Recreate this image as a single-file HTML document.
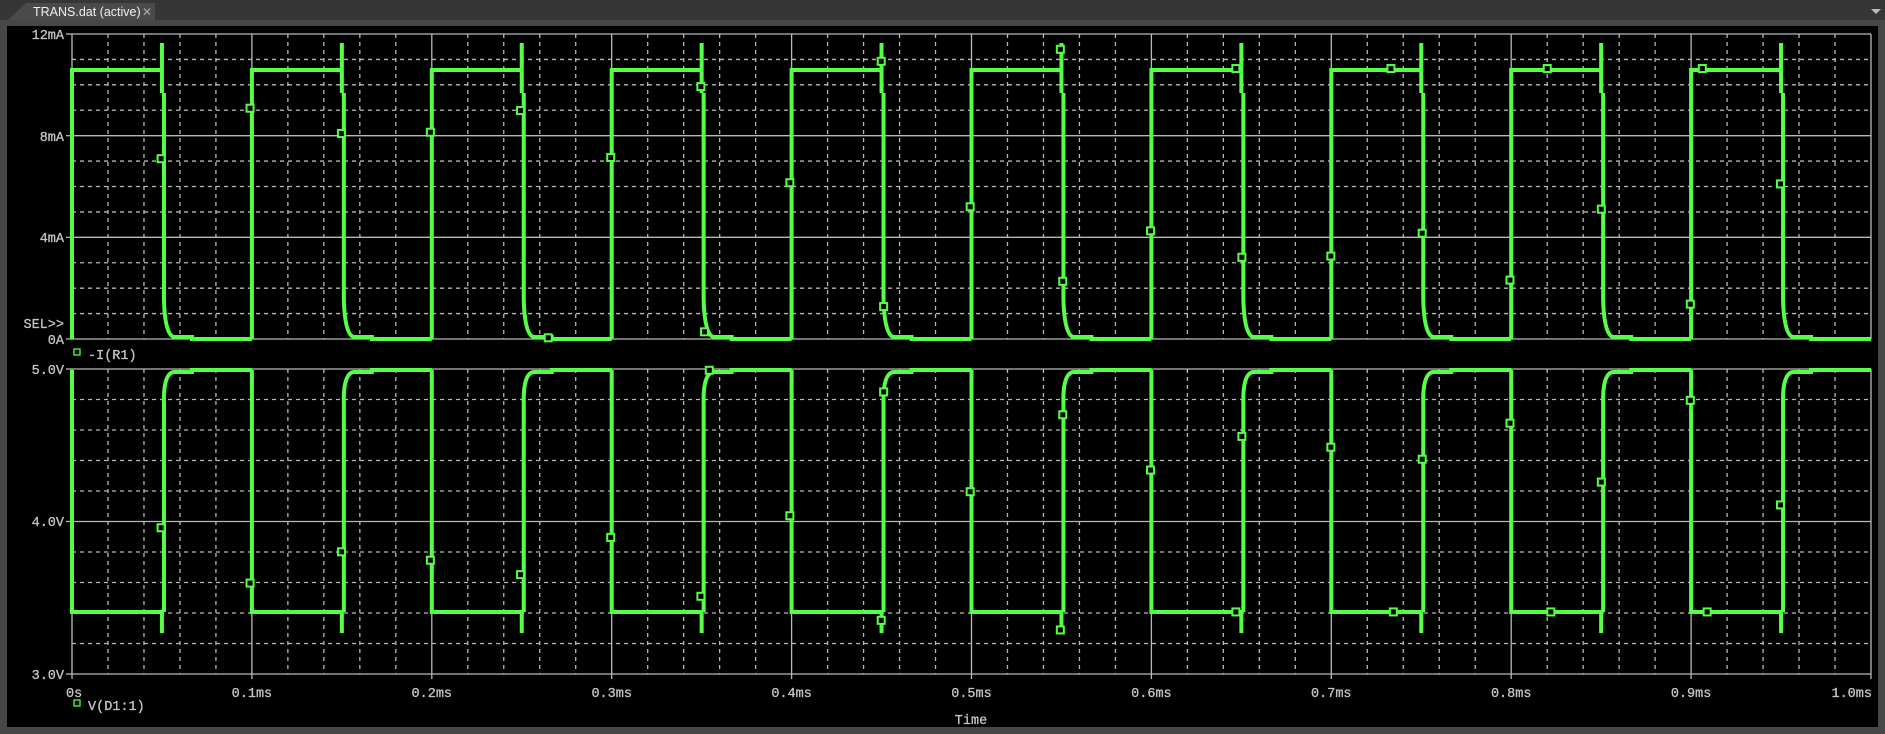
<!DOCTYPE html>
<html><head><meta charset="utf-8"><style>
html,body{margin:0;padding:0;background:#3a3a3a;width:1885px;height:734px;overflow:hidden}
svg{position:absolute;left:0;top:0}
</style></head><body>
<svg id="s" width="1885" height="734" xmlns="http://www.w3.org/2000/svg">
<rect x="0" y="0" width="1885" height="734" fill="#474747"/>
<rect x="0" y="0" width="1885" height="20" fill="#363636"/>
<polygon points="8,20 26,3 155,3 155,20" fill="#4a4a4a"/>
<text x="33" y="16" font-family="Liberation Sans, sans-serif" font-size="12.5" fill="#f0f0f0">TRANS.dat (active)</text>
<text x="142" y="16" font-family="DejaVu Sans, sans-serif" font-size="12" fill="#aaa">✕</text>
<polygon points="1871,9 1881,9 1876,14" fill="#bbb"/>
<rect x="7" y="26" width="1871" height="701" fill="#000"/>
<g id="grid"></g>
<g id="lbl" font-family="Liberation Mono, DejaVu Sans Mono, monospace" font-size="13.5" fill="#c4c4c4" stroke="#c4c4c4" stroke-width="0.3"></g>
<g id="wave" fill="none" stroke="#55ff45" stroke-width="4"></g>
<g id="mk" fill="#000" stroke="#55ff45" stroke-width="2"></g>
</svg>
<script>
var NS="http://www.w3.org/2000/svg";
function el(p,t,a,txt){var e=document.createElementNS(NS,t);for(var k in a)e.setAttribute(k,a[k]);if(txt!=null)e.textContent=txt;document.getElementById(p).appendChild(e);return e;}
var X0=72,X1=1871,DX=(X1-X0)/10;
function line(x1,y1,x2,y2,dash,col){var a={x1:x1,y1:y1,x2:x2,y2:y2,stroke:col||"#b8b8b8","stroke-width":1.3};if(dash)a["stroke-dasharray"]="4 4";el("grid","line",a);}
var P=[[34,339,12],[369,674,10]];
P.forEach(function(p){
  var t=p[0],b=p[1],n=p[2],h=(b-t)/n;
  for(var i=1;i<n;i++){var y=t+h*i;var major=(n==12&&i%4==0)||(n==10&&i==5);line(X0,y,X1,y,!major);}
  for(var i=1;i<50;i++){var x=X0+i*DX/5;line(x,t,x,b,i%5!=0);}
  line(X0,t,X1,t);line(X0,b,X1,b);line(X0,t,X0,b);line(X1,t,X1,b);
});
[[34],[135.7],[237.3],[339],[369],[521.5],[674]].forEach(function(y){line(66,y[0],72,y[0]);});
for(var i=0;i<=10;i++)line(X0+i*DX,674,X0+i*DX,679);
function tx(x,y,s,anc){el("lbl","text",{x:x,y:y,"text-anchor":anc||"end"},s);}
tx(64,39,"12mA");tx(64,141,"8mA");tx(64,242,"4mA");tx(64,328,"SEL>>");tx(64,344,"0A");
tx(64,374,"5.0V");tx(64,526,"4.0V");tx(64,679,"3.0V");
tx(66,697,"0s","start");
for(var i=1;i<10;i++)tx(X0+i*DX,697,"0."+i+"ms","middle");
tx(1872,697,"1.0ms");
tx(971,724,"Time","middle");
tx(88,359,"-I(R1)","start");tx(88,710,"V(D1:1)","start");
el("grid","rect",{x:74,y:349,width:6,height:6,fill:"none",stroke:"#55ff45","stroke-width":1.3});
el("grid","rect",{x:74,y:700,width:6,height:6,fill:"none",stroke:"#55ff45","stroke-width":1.3});
var di="",dv="";
for(var k=0;k<10;k++){
  var x0=X0+k*DX,xf=x0+DX/2,xe=x0+DX;
  di+="M"+x0+",339 V70 H"+xf+" M"+xf+",43 V93 M"+(xf+2)+",93 V300 Q"+(xf+3)+",335 "+(xf+12)+",337 H"+(xf+30)+" V339 H"+xe+" ";
  dv+="M"+x0+",370 V612 H"+xf+" M"+xf+",633 V612 M"+(xf+2)+",612 V395 Q"+(xf+3)+",373 "+(xf+12)+",372 H"+(xf+30)+" V370 H"+xe+" ";
}
el("wave","path",{d:di});el("wave","path",{d:dv});
var S=1.2022;
var m=[[134,132],[208,90],[284,111],[358,110],[433,92],[508,131],[583,72],[586,276],[657,152],[733,51],[735,255],[807,172],[882,41],[884,234],[957,192],[1033,214],[1028,57],[1107,213],[1157,57],[1183,194],[1256,233],[1287,57],[1332,174],[1406,253],[1416,57],[1481,153],[456,281],
[134,439],[208,485],[284,459],[358,466],[433,478],[508,447],[583,496],[590,308],[657,429],[733,516],[735,326],[807,409],[882,524],[884,345],[957,391],[1028,509],[1033,363],[1107,372],[1159,509],[1183,382],[1256,352],[1290,509],[1332,401],[1406,333],[1420,509],[1481,420]];
m.forEach(function(p){el("mk","rect",{x:p[0]*S-3.5,y:p[1]*S-3.5,width:7,height:7});});
</script>
</body></html>
